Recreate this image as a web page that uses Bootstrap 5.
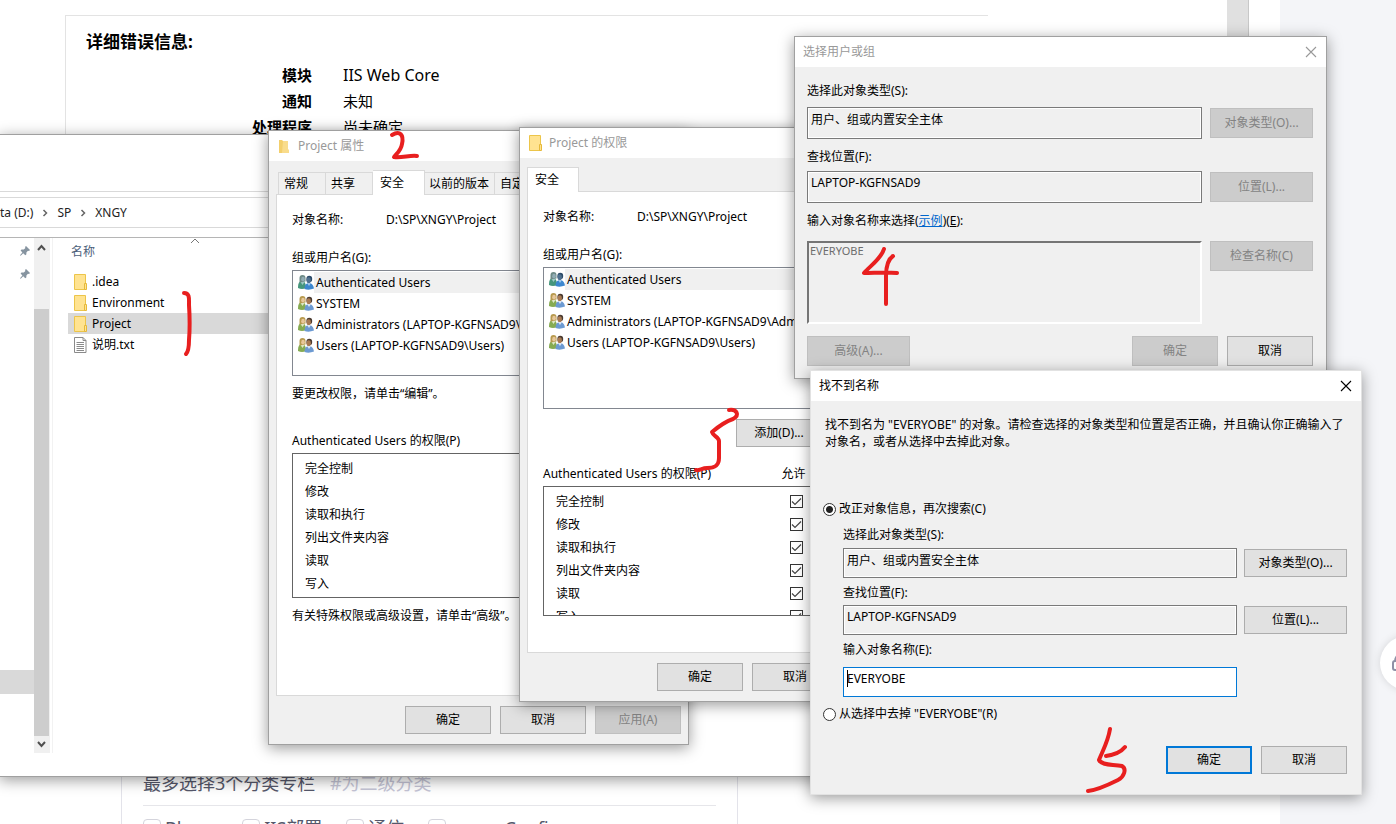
<!DOCTYPE html>
<html lang="zh-CN">
<head>
<meta charset="utf-8">
<meta name="viewport" content="width=device-width, initial-scale=1">
<title>Project 的权限</title>
<link href="https://cdn.jsdelivr.net/npm/bootstrap@5.3.0/dist/css/bootstrap.min.css" rel="stylesheet">
<style>
body{font:12px/16px "Noto Sans","Noto Sans CJK SC",sans-serif;color:#000;background:#fff;height:100vh;overflow:hidden}
button,input,textarea{font:inherit;color:inherit;border-radius:0}
label{display:block}
/* page behind the windows */
.side{width:116px;background:#f4f5f8}
.track{width:22px;height:60px;background:#e0e0e0;border-right:1px solid #c8c8c8;margin-right:31px}
.err{border:1px solid #e3e3e3;border-width:1px 0 0 1px;margin:15px 0 0 65px;width:923px;padding:14px 20px;font-size:15px;line-height:26px}
.err h2{font-size:17px;line-height:24px;font-weight:700;margin:0 0 8px}
.err th{width:226px;text-align:right;padding:0}
.err td{padding:0 0 0 31px}
.err .latin{font-size:16px}
.cats{margin-left:121px;width:617px;height:70px;overflow:hidden;border:1px solid #e3e3ea;border-width:0 1px;padding:17px 21px 0;font-size:18px;line-height:24px;color:#55576a}
.cats .hint{color:#c5c5d6;margin-left:10px}
.cats .picks{border-top:1px solid #e6e6ea;margin-top:10px;padding-top:10px}
.cats .picks label{margin-right:24px}
.cats input{appearance:none;width:18px;height:18px;border:1px solid #d4d4dc;border-radius:4px;margin:0 4px 0 0;flex:none}
.help{right:-38px;top:636px;width:54px;height:54px;border:0;border-radius:50%;background:#fff;box-shadow:0 0 8px #0002}
/* windows */
.win{position:absolute;background:#f0f0f0;border:1px solid #a0a0a0;box-shadow:0 3px 14px #0006}
.bar{height:30px;background:#fff;padding:0 9px;color:#999}
.bar h1{font-size:12px;line-height:16px;margin:0;font-weight:400}
.bar button{border:0;background:none;padding:0;line-height:0}
.bar .ico{margin-right:6px}
.explorer{left:-1px;top:134px;width:1100px;height:643px;background:#fff}
.props{left:268px;top:130px;width:421px}
.perms{left:519px;top:127px;width:422px}
.picker{left:794px;top:36px;width:533px}
.missing{left:810px;top:370px;width:552px;border-color:#e2e2e2}
.missing .bar,.picker .bar{padding:0 9px 0 8px}
.missing .bar{color:#000}
.sheet{padding:9px 7px 10px}
.tabs{height:24px}
.tabs button{border:1px solid #d9d9d9;border-width:1px 1px 0 0;background:#f0f0f0;height:22px;padding:0 5px;text-align:left}
.tabs button:first-child{border-left-width:1px}
.tabs .on{background:#fff;height:25px;margin-bottom:-1px;width:52px;padding:0 7px;position:relative}
.pane{background:#fff;border:1px solid #d9d9d9;padding:17px 15px 36px}
.objname{width:94px}
.box{border:1px solid #828790;background:#fff;overflow:hidden}
.users{margin:4px 0 0;padding:1px 0 0 5px;list-style:none}
.users li{height:21px;display:flex;align-items:center}
.users span{flex:1;padding-left:2px;line-height:21px;white-space:nowrap}
.users li:first-child span{background:#f0f0f0}
.rights{border-color:#646464;margin-top:4px;padding-top:3px}
.rights table{width:100%}
.rights td,.rights th{height:23px;padding:0;font-weight:400;text-align:center}
.rights th{text-align:left;padding-left:12px}
.c1{width:65px}.c2{width:87px}
.rights input{appearance:none;display:block;margin:0 auto;width:13px;height:13px;border:1px solid #333;background:#fff}
.rights input:checked{background:#fff url("data:image/svg+xml,%3Csvg xmlns='http://www.w3.org/2000/svg' viewBox='0 0 11 11'%3E%3Cpath d='M1 5.5 4 8.5 10 2.5' fill='none' stroke='%23444' stroke-width='1.2'/%3E%3C/svg%3E")}
.push{width:86px;height:28px;border:1px solid #adadad;background:#e1e1e1;padding:0;line-height:16px}
.push:disabled{background:#ccc;border-color:#bfbfbf;color:#838383}
.wide{width:103px}
.tall .push{height:30px}
.main{border:2px solid #0078d7}
.field{flex:1;min-width:0;height:30px;border:1px solid #7a7a7a;background:#f0f0f0;padding:0 3px 7px;outline:1px solid #fff;outline-offset:-2px}
.tall .field{height:32px;padding-bottom:9px}
.live{background:#fff;border-color:#0078d7}
.names{flex:1;height:83px;resize:none;background:#f0f0f0;border:2px solid;border-color:#757575 #fff #fff #757575;padding:0 1px;color:#6d6d6d;font-size:11px}
.pad1{padding:16px 13px 12px 12px}
.pad2{padding:15px 14px 20px 14px}
.pad2 p{line-height:17px;margin:0 0 51px;white-space:nowrap}
.pad2 input[type=radio]{appearance:none;width:13px;height:13px;margin:0 3px 0 -2px;border:1px solid #333;border-radius:50%;background:#fff}
.pad2 input[type=radio]:checked{background:radial-gradient(circle,#222 3px,#fff 4px)}
.gap9{gap:9px}.gap8{gap:8px}.gap7{gap:7px}
.mt10{margin-top:10px}
/* explorer */
.ribbon{height:57px;border-bottom:1px solid #d9d9d9}
.addr{height:31px;margin:5px 0 9px;border:1px solid #d9d9d9;border-left:0;color:#222}
.split{border-top:1px solid #b5b5b5}
.quick{width:34px}
.picked{height:24px;background:#d9d9d9;margin-top:389px}
.scroll{width:16px;height:515px;background:#f0f0f0}
.thumb{width:15px;height:427px;background:#cdcdcd}
.files{margin-left:2px;border-left:1px solid #f2f2f2}
.files table{width:100%;margin:0 0 0 15px}
.files th{font-weight:400;color:#4c607a;height:33px;padding:0 0 6px 3px}
.files th svg{margin:-6px 0 0 95px}
.files td{height:21px;padding:0 0 0 6px}
.files td svg{margin-right:5px;vertical-align:top}
.files .cur{background:#d9d9d9}
.ink{inset:0;width:100%;height:100%;pointer-events:none}
.caret{left:4px;top:3px;width:1px;height:17px;background:#000}
</style>
</head>
<body class="position-relative">
<svg width="0" height="0" class="position-absolute" aria-hidden="true">
  <symbol id="folder" viewBox="0 0 13 16"><path d="M.5.5h11v15H.5z" fill="#ffe391" stroke="#ecc54a"/><path d="M10.500 9.500h2v6h-2z" fill="#ffe391" stroke="#e6b93a"/></symbol>
  <symbol id="duo" viewBox="0 0 16 15">
    <path d="M0 12q0-6 4-6 4 0 4 7-4 2-8 0z" fill="#86ab52"/><path d="M2.500 7l2 3 2-3z" fill="#dfe8c8"/>
    <path d="M1.500 7.500V3q0-3 3-3t3 3v3.500z" fill="#b79a4e"/><ellipse cx="5" cy="4.200" rx="1.800" ry="2.400" fill="#e8c79a"/>
    <path d="M6.500 14q0-6 4.500-6 4 0 5 5.500-5 2-9.500.5z" fill="#6c9ad2"/><path d="M9 8l2 3 2-3z" fill="#dbe6f3"/>
    <ellipse cx="11.300" cy="4" rx="2.900" ry="3.200" fill="#4a3a30"/><ellipse cx="10.700" cy="5.200" rx="2.200" ry="2.900" fill="#a87a52"/>
  </symbol>
  <symbol id="duo-sel" viewBox="0 0 16 15">
    <path d="M0 12q0-6 4-6 4 0 4 7-4 2-8 0z" fill="#45967c"/><path d="M2.500 7l2 3 2-3z" fill="#9fc8c4"/>
    <path d="M1.500 7.500V3q0-3 3-3t3 3v3.500z" fill="#6d8a86"/><ellipse cx="5" cy="4.200" rx="1.800" ry="2.400" fill="#91acb4"/>
    <path d="M6.500 14q0-6 4.500-6 4 0 5 5.500-5 2-9.500.5z" fill="#3c87cf"/><path d="M9 8l2 3 2-3z" fill="#9fc6ea"/>
    <ellipse cx="11.300" cy="4" rx="2.900" ry="3.200" fill="#2b4a68"/><ellipse cx="10.700" cy="5.200" rx="2.200" ry="2.900" fill="#4f708e"/>
  </symbol>
  <symbol id="pin" viewBox="0 0 10 10"><path d="M6 0l4 4-1 1-1-.3L6.500 6.300 6.300 8.500 5.300 9.300 3.200 7.200.7 9.700 0 9.300 2.400 6.400.6 4.600 1.500 3.600 3.800 3.500 5.400 2 5 1z" fill="#8694a0"/></symbol>
  <symbol id="cross" viewBox="0 0 12 12"><path d="M1 1l10 10M11 1L1 11" fill="none" stroke="currentColor" stroke-width="1.100"/></symbol>
</svg>

<div class="d-flex h-100">
  <main class="flex-grow-1 d-flex flex-column justify-content-between">
    <section class="err">
      <h2>详细错误信息:</h2>
      <table>
        <tr><th scope="row">模块</th><td class="latin">IIS Web Core</td></tr>
        <tr><th scope="row">通知</th><td>未知</td></tr>
        <tr><th scope="row">处理程序</th><td>尚未确定</td></tr>
      </table>
    </section>
    <section class="cats">
      <div>最多选择3个分类专栏 <span class="hint">#为二级分类</span></div>
      <div class="picks d-flex">
        <label class="d-flex align-items-center"><input type="checkbox">Blazor</label>
        <label class="d-flex align-items-center"><input type="checkbox">IIS部署</label>
        <label class="d-flex align-items-center"><input type="checkbox">通信</label>
        <label class="d-flex align-items-center"><input type="checkbox">nacos Config</label>
      </div>
    </section>
  </main>
  <div class="track"></div>
  <aside class="side"></aside>
</div>
<button class="help position-absolute p-0 text-start" aria-label="客服"><svg style="margin-left:10px" width="24" height="22" viewBox="0 0 24 22" fill="none" stroke="#8f90a6" stroke-width="2"><path d="M5 9q1-7 7-7t7 7"/><rect x="3" y="9" width="5" height="9" rx="2"/><rect x="16" y="9" width="5" height="9" rx="2"/></svg></button>

<section class="win explorer" aria-label="资源管理器">
  <div class="ribbon"></div>
  <div class="addr d-flex align-items-center"><span>ta (D:)</span>
    <svg class="mx-2" width="8" height="8" viewBox="0 0 8 8" fill="none" stroke="#666" stroke-width="1.500"><path d="M2.500 1l3 3-3 3"/></svg><span>SP</span>
    <svg class="mx-2" width="8" height="8" viewBox="0 0 8 8" fill="none" stroke="#666" stroke-width="1.500"><path d="M2.500 1l3 3-3 3"/></svg><span>XNGY</span></div>
  <div class="split d-flex align-items-start">
    <div class="quick">
      <svg class="d-block ms-auto me-1 mt-2" width="10" height="10"><use href="#pin"/></svg>
      <svg class="d-block ms-auto me-1 mt10" width="10" height="15"><use href="#pin" y="3" height="10"/></svg>
      <div class="picked"></div>
    </div>
    <div class="scroll d-flex flex-column justify-content-end">
      <svg class="mb-auto d-block" width="15" height="18" viewBox="0 0 15 18" fill="none" stroke="#505050" stroke-width="2"><path d="M4 12l3.500-4 3.500 4"/></svg>
      <div class="thumb"></div>
      <svg class="d-block" width="15" height="17" viewBox="0 0 15 17" fill="none" stroke="#505050" stroke-width="2"><path d="M4 6l3.500 4L11 6"/></svg>
    </div>
    <div class="files flex-grow-1 align-self-stretch">
      <table>
        <thead><tr><th scope="col">名称<svg width="10" height="6" viewBox="0 0 10 6" fill="none" stroke="#777" class="align-top"><path d="M1 5l4-4 4 4"/></svg></th></tr></thead>
        <tbody>
          <tr><td><svg width="13" height="16"><use href="#folder"/></svg>.idea</td></tr>
          <tr><td><svg width="13" height="16"><use href="#folder"/></svg>Environment</td></tr>
          <tr class="cur"><td><svg width="13" height="16"><use href="#folder"/></svg>Project</td></tr>
          <tr><td><svg width="13" height="16" viewBox="0 0 13 16"><path d="M.5.5h8.500l3 3v12H.5z" fill="#fff" stroke="#8a8a8a"/><path d="M9 .5v3h3M2.500 5.500h7.500M2.500 7.500h7.500M2.500 9.500h7.500M2.500 11.500h7.500M2.500 13.500h7.500" fill="none" stroke="#8a8a8a"/></svg>说明.txt</td></tr>
        </tbody>
      </table>
    </div>
  </div>
</section>

<section class="win props" aria-labelledby="t1">
  <header class="bar d-flex align-items-center"><svg class="ico" width="14" height="13" viewBox="0 0 14 13"><path d="M1 0h3l1 1v12H1z" fill="#f3cf6c"/><path d="M5 1h5v8l1 1v3H4z" fill="#f9dc8c"/></svg><h1 id="t1">Project 属性</h1></header>
  <div class="sheet">
    <div class="tabs d-flex align-items-end" style="padding-left:2px">
      <button style="width:48px">常规</button><button style="width:47px">共享</button><button class="on">安全</button><button class="px-1 text-nowrap" style="width:70px">以前的版本</button><button>自定义</button>
    </div>
    <div class="pane" style="padding-bottom:71px">
      <div class="d-flex"><span class="objname">对象名称:</span><span>D:\SP\XNGY\Project</span></div>
      <div style="margin-top:22px">组或用户名(G):</div>
      <ul class="box users" style="height:106px">
        <li><svg width="16" height="15"><use href="#duo-sel"/></svg><span>Authenticated Users</span></li>
        <li><svg width="16" height="15"><use href="#duo"/></svg><span>SYSTEM</span></li>
        <li><svg width="16" height="15"><use href="#duo"/></svg><span>Administrators (LAPTOP-KGFNSAD9\Administrators)</span></li>
        <li><svg width="16" height="15"><use href="#duo"/></svg><span>Users (LAPTOP-KGFNSAD9\Users)</span></li>
      </ul>
      <div class="mt10">要更改权限，请单击“编辑”。</div>
      <div style="margin-top:31px">Authenticated Users 的权限(P)</div>
      <div class="box rights" style="height:145px">
        <table>
          <tr><th scope="row">完全控制</th></tr><tr><th scope="row">修改</th></tr><tr><th scope="row">读取和执行</th></tr><tr><th scope="row">列出文件夹内容</th></tr><tr><th scope="row">读取</th></tr><tr><th scope="row">写入</th></tr>
        </table>
      </div>
      <div class="mt10">有关特殊权限或高级设置，请单击“高级”。</div>
    </div>
    <div class="d-flex justify-content-end gap9 mt10"><button class="push">确定</button><button class="push">取消</button><button class="push" disabled>应用(A)</button></div>
  </div>
</section>

<section class="win perms" aria-labelledby="t2">
  <header class="bar d-flex align-items-center"><svg class="ico" width="14" height="16"><use href="#folder" width="13" height="16"/></svg><h1 id="t2">Project 的权限</h1></header>
  <div class="sheet">
    <div class="tabs d-flex align-items-end"><button class="on">安全</button></div>
    <div class="pane">
      <div class="d-flex"><span class="objname">对象名称:</span><span>D:\SP\XNGY\Project</span></div>
      <div style="margin-top:22px">组或用户名(G):</div>
      <ul class="box users" style="height:142px">
        <li><svg width="16" height="15"><use href="#duo-sel"/></svg><span>Authenticated Users</span></li>
        <li><svg width="16" height="15"><use href="#duo"/></svg><span>SYSTEM</span></li>
        <li><svg width="16" height="15"><use href="#duo"/></svg><span>Administrators (LAPTOP-KGFNSAD9\Administrators)</span></li>
        <li><svg width="16" height="15"><use href="#duo"/></svg><span>Users (LAPTOP-KGFNSAD9\Users)</span></li>
      </ul>
      <div class="d-flex justify-content-end gap9 mt10"><button class="push">添加(D)...</button><button class="push">删除(R)</button></div>
      <div class="d-flex" style="margin-top:19px"><span class="flex-grow-1">Authenticated Users 的权限(P)</span><span class="c1 text-center">允许</span><span class="c2 text-center me-1">拒绝</span></div>
      <div class="box rights" style="height:130px">
        <table>
          <tr><th scope="row">完全控制</th><td class="c1"><input type="checkbox" checked aria-label="允许完全控制"></td><td class="c2"><input type="checkbox" aria-label="拒绝完全控制"></td></tr>
          <tr><th scope="row">修改</th><td><input type="checkbox" checked aria-label="允许修改"></td><td><input type="checkbox" aria-label="拒绝修改"></td></tr>
          <tr><th scope="row">读取和执行</th><td><input type="checkbox" checked aria-label="允许读取和执行"></td><td><input type="checkbox" aria-label="拒绝读取和执行"></td></tr>
          <tr><th scope="row">列出文件夹内容</th><td><input type="checkbox" checked aria-label="允许列出文件夹内容"></td><td><input type="checkbox" aria-label="拒绝列出文件夹内容"></td></tr>
          <tr><th scope="row">读取</th><td><input type="checkbox" checked aria-label="允许读取"></td><td><input type="checkbox" aria-label="拒绝读取"></td></tr>
          <tr><th scope="row">写入</th><td><input type="checkbox" checked aria-label="允许写入"></td><td><input type="checkbox" aria-label="拒绝写入"></td></tr>
        </table>
      </div>
    </div>
    <div class="d-flex justify-content-end gap9 mt10"><button class="push">确定</button><button class="push">取消</button><button class="push" disabled>应用(A)</button></div>
  </div>
</section>

<section class="win picker" aria-labelledby="t3">
  <header class="bar d-flex align-items-center justify-content-between"><h1 id="t3">选择用户或组</h1><button aria-label="关闭"><svg width="12" height="12"><use href="#cross"/></svg></button></header>
  <div class="pad1 tall">
    <label for="a1">选择此对象类型(S):</label>
    <div class="d-flex gap8 mt-2 align-items-center"><input class="field" id="a1" readonly value="用户、组或内置安全主体"><button class="push wide" disabled>对象类型(O)...</button></div>
    <label for="a2" class="mt10">查找位置(F):</label>
    <div class="d-flex gap8 align-items-center" style="margin-top:6px"><input class="field" id="a2" readonly value="LAPTOP-KGFNSAD9"><button class="push wide" disabled>位置(L)...</button></div>
    <label for="a3" class="mt10">输入对象名称来选择(<a href="#" style="color:#06c">示例</a>)(<u>E</u>):</label>
    <div class="d-flex gap8 align-items-start" style="margin-top:12px"><textarea class="names" id="a3" disabled>EVERYOBE</textarea><button class="push wide" disabled>检查名称(C)</button></div>
    <div class="d-flex gap9" style="margin-top:12px"><button class="push wide me-auto" disabled>高级(A)...</button><button class="push" disabled>确定</button><button class="push">取消</button></div>
  </div>
</section>

<section class="win missing" aria-labelledby="t4">
  <header class="bar d-flex align-items-center justify-content-between"><h1 id="t4">找不到名称</h1><button aria-label="关闭"><svg width="12" height="12"><use href="#cross"/></svg></button></header>
  <div class="pad2">
    <p>找不到名为 "EVERYOBE" 的对象。请检查选择的对象类型和位置是否正确，并且确认你正确输入了<br>对象名，或者从选择中去掉此对象。</p>
    <label class="d-flex align-items-center"><input type="radio" name="fix" checked>改正对象信息，再次搜索(C)</label>
    <div style="padding-left:18px">
      <label for="b1" class="mt10">选择此对象类型(S):</label>
      <div class="d-flex gap7 align-items-center" style="margin-top:5px"><input class="field" id="b1" readonly value="用户、组或内置安全主体"><button class="push wide">对象类型(O)...</button></div>
      <label for="b2" style="margin-top:7px">查找位置(F):</label>
      <div class="d-flex gap7 align-items-center mt-1"><input class="field" id="b2" readonly value="LAPTOP-KGFNSAD9"><button class="push wide">位置(L)...</button></div>
      <label for="b3" style="margin-top:7px">输入对象名称(E):</label>
      <div class="d-flex position-relative" style="margin:9px 110px 9px 0"><input class="field live" id="b3" value="EVERYOBE"><span class="caret position-absolute"></span></div>
    </div>
    <label class="d-flex align-items-center"><input type="radio" name="fix">从选择中去掉 "EVERYOBE"(R)</label>
    <div class="d-flex justify-content-end gap9 mt-4"><button class="push main">确定</button><button class="push">取消</button></div>
  </div>
</section>

<!-- red pen notes over the windows -->
<svg class="ink position-absolute" fill="none" stroke="#e81f1f" stroke-width="4" stroke-linecap="round" stroke-linejoin="round" aria-hidden="true">
  <path d="M392 135C400 130 404 135 402 144 401 151 396 154 394 157 402 158 410 155 417 156"/>
  <path d="M184 293C190 293 189 299 189 305 190 320 190 328 189 340 189 346 188 352 186 354"/>
  <path d="M729 410C737 409 740 415 733 419 724 422 718 427 712 432 713 436 719 437 719 441L719 458C719 467 713 468 707 468 702 468 699 471 696 470"/>
  <path d="M884 249C881 259 871 265 864 273 874 273 886 272 897 273M893 256C887 260 886 268 886 276L886 304"/>
  <path d="M1110 729C1108 742 1102 752 1099 760 1102 766 1113 764 1122 766 1127 769 1124 777 1118 780 1108 785 1098 790 1088 791M1106 756C1113 755 1121 752 1125 747"/>
</svg>
<script src="https://cdn.jsdelivr.net/npm/bootstrap@5.3.0/dist/js/bootstrap.bundle.min.js"></script>
</body>
</html>
